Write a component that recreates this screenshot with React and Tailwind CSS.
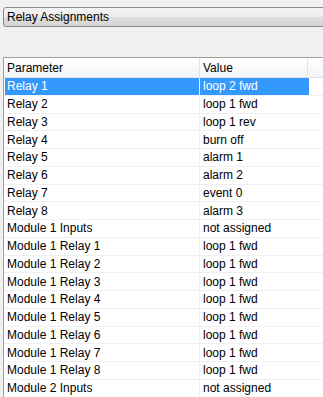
const rows = [
  ['Relay 1', 'loop 2 fwd'],
  ['Relay 2', 'loop 1 fwd'],
  ['Relay 3', 'loop 1 rev'],
  ['Relay 4', 'burn off'],
  ['Relay 5', 'alarm 1'],
  ['Relay 6', 'alarm 2'],
  ['Relay 7', 'event 0'],
  ['Relay 8', 'alarm 3'],
  ['Module 1 Inputs', 'not assigned'],
  ['Module 1 Relay 1', 'loop 1 fwd'],
  ['Module 1 Relay 2', 'loop 1 fwd'],
  ['Module 1 Relay 3', 'loop 1 fwd'],
  ['Module 1 Relay 4', 'loop 1 fwd'],
  ['Module 1 Relay 5', 'loop 1 fwd'],
  ['Module 1 Relay 6', 'loop 1 fwd'],
  ['Module 1 Relay 7', 'loop 1 fwd'],
  ['Module 1 Relay 8', 'loop 1 fwd'],
  ['Module 2 Inputs', 'not assigned'],
];

export default function App() {
  return (
    <div className="w-[323px] h-[397px] overflow-hidden bg-[#f0f0f0] text-[12px] text-black font-['Liberation_Sans',Arial,sans-serif]">
      {/* Section bar */}
      <div className="pt-[7px] pl-[3px]">
        <div className="h-[20px] w-[340px] rounded-[3px] border border-[#8a8a8a] bg-[linear-gradient(#f4f4f4_0%,#ececec_50%,#dedede_51%,#d4d4d4_100%)] flex items-center pl-[3px]">
          Relay Assignments
        </div>
      </div>

      {/* List */}
      <div className="mt-[30px] ml-[3px] w-[340px] h-[400px] border-t border-l border-[#a0a0a0] bg-white">
        <div className="flex h-[20px] bg-[linear-gradient(#ffffff,#f3f4f6)] border-b border-[#e3e3e3]">
          <div className="w-[196px] pl-[3px] flex items-center border-r border-[#e3e3e3]">Parameter</div>
          <div className="w-[108px] pl-[3px] flex items-center border-r border-[#e3e3e3]">Value</div>
          <div className="flex-1" />
        </div>
        {rows.map(([p, v], i) => (
          <div key={p} className="flex h-[17.75px] border-b border-[#f0f0f0]">
            <div className={`w-[304px] ml-[1px] flex ${i === 0 ? 'bg-[#3399ff] text-white' : ''}`}>
              <div className="w-[195px] pl-[2px] flex items-center border-r border-[#f0f0f0]">{p}</div>
              <div className="w-[109px] pl-[3px] flex items-center">{v}</div>
            </div>
          </div>
        ))}
      </div>
    </div>
  );
}
